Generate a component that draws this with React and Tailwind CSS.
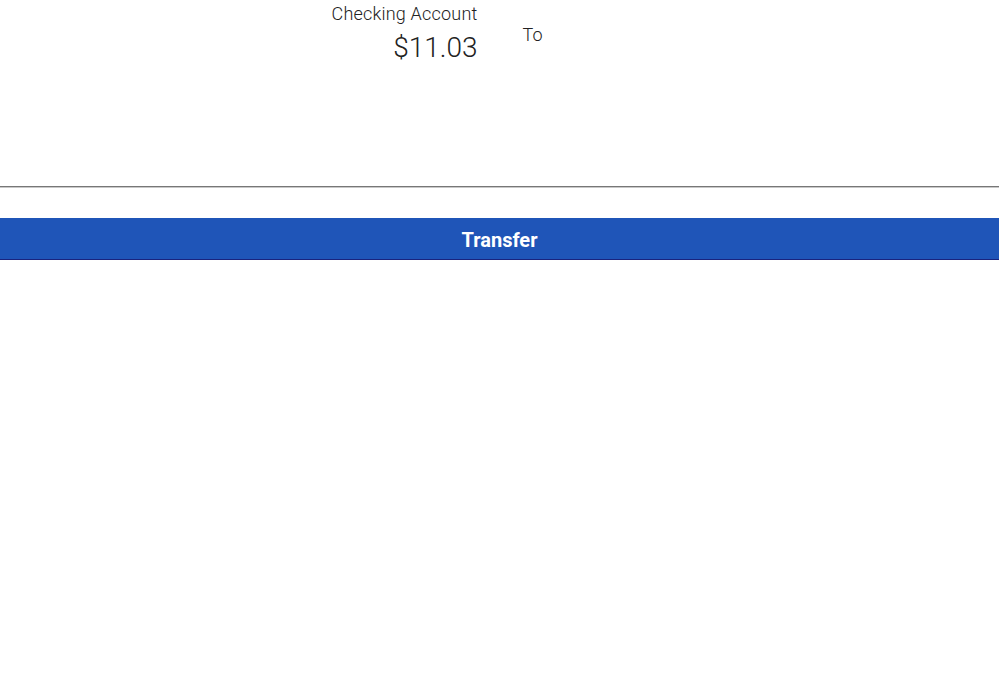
export default function App() {
  return (
    <div className="w-[999px] h-[699px] bg-white" style={{ fontFamily: 'Roboto, "Liberation Sans", sans-serif' }}>
      <div className="grid grid-cols-2 h-[186px]">
        <div className="flex flex-col items-end pr-[22px] pt-[3px]">
          <div className="text-[18px] leading-[22px] font-light tracking-[0.2px] text-[#222]">Checking Account</div>
          <div className="text-[28px] leading-[36px] font-light text-[#222] mt-[5px]">$11.03</div>
        </div>
        <div className="pl-[23px] pt-[24px]">
          <div className="text-[18px] leading-[22px] font-light text-[#222]">To</div>
        </div>
      </div>
      <div className="h-[1px] bg-[#777]"></div>
      <div className="h-[1px] bg-[#c8c8c8]"></div>
      <div className="mt-[30px] h-[42px] bg-[#1f55b8] border-b border-[#1a237e] flex items-start justify-center pt-[11px]">
        <span className="text-white text-[20px] leading-[22px] font-bold">Transfer</span>
      </div>
    </div>
  );
}
